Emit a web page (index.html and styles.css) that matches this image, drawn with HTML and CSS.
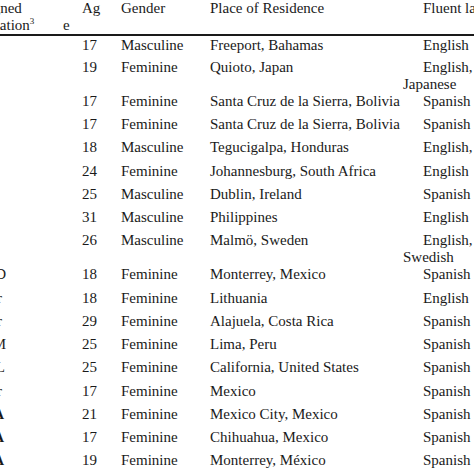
FILE: index.html
```html
<!DOCTYPE html>
<html lang="en">
<head>
<meta charset="utf-8">
<title>Participants</title>
<link rel="stylesheet" href="styles.css">
</head>
<body>
<table class="tbl">
  <colgroup>
    <col class="c-id"><col class="c-age"><col class="c-gen"><col class="c-place"><col class="c-lang">
  </colgroup>
  <thead>
    <tr>
      <th class="hid">Assigned<br>Identification<sup>3</sup></th>
      <th>Ag<br>e</th>
      <th>Gender</th>
      <th>Place of Residence</th>
      <th>Fluent languages</th>
    </tr>
  </thead>
  <tbody>
    <tr><td class="id"></td><td>17</td><td>Masculine</td><td>Freeport, Bahamas</td><td>English</td></tr>
    <tr><td class="id"></td><td>19</td><td>Feminine</td><td>Quioto, Japan</td><td><div class="two">English,<br>Japanese</div></td></tr>
    <tr><td class="id"></td><td>17</td><td>Feminine</td><td>Santa Cruz de la Sierra, Bolivia</td><td>Spanish</td></tr>
    <tr><td class="id"></td><td>17</td><td>Feminine</td><td>Santa Cruz de la Sierra, Bolivia</td><td>Spanish</td></tr>
    <tr><td class="id"></td><td>18</td><td>Masculine</td><td>Tegucigalpa, Honduras</td><td>English, Spanish</td></tr>
    <tr><td class="id"></td><td>24</td><td>Feminine</td><td>Johannesburg, South Africa</td><td>English</td></tr>
    <tr><td class="id"></td><td>25</td><td>Masculine</td><td>Dublin, Ireland</td><td>Spanish</td></tr>
    <tr><td class="id"></td><td>31</td><td>Masculine</td><td>Philippines</td><td>English</td></tr>
    <tr><td class="id"></td><td>26</td><td>Masculine</td><td>Malmö, Sweden</td><td><div class="two">English,<br>Swedish</div></td></tr>
    <tr><td class="id">GND</td><td>18</td><td>Feminine</td><td>Monterrey, Mexico</td><td>Spanish</td></tr>
    <tr><td class="id tail">Queer</td><td>18</td><td>Feminine</td><td>Lithuania</td><td>English</td></tr>
    <tr><td class="id tail">Queer</td><td>29</td><td>Feminine</td><td>Alajuela, Costa Rica</td><td>Spanish</td></tr>
    <tr><td class="id">CIS-M</td><td>25</td><td>Feminine</td><td>Lima, Peru</td><td>Spanish</td></tr>
    <tr><td class="id half">GL</td><td>25</td><td>Feminine</td><td>California, United States</td><td>Spanish</td></tr>
    <tr><td class="id tail">Queer</td><td>17</td><td>Feminine</td><td>Mexico</td><td>Spanish</td></tr>
    <tr><td class="id bold">LA</td><td>21</td><td>Feminine</td><td>Mexico City, Mexico</td><td>Spanish</td></tr>
    <tr><td class="id bold">LA</td><td>17</td><td>Feminine</td><td>Chihuahua, Mexico</td><td>Spanish</td></tr>
    <tr><td class="id bold">LA</td><td>19</td><td>Feminine</td><td>Monterrey, México</td><td>Spanish</td></tr>
  </tbody>
</table>
</body>
</html>
```

FILE: styles.css
```css
html, body {
  margin: 0;
  padding: 0;
  overflow: hidden;
  background: #ffffff;
}

body {
  width: 474px;
  height: 474px;
  font-family: "Liberation Serif", "Times New Roman", serif;
  font-size: 15px;
  color: #1a1a1a;
}

.tbl {
  table-layout: fixed;
  border-collapse: collapse;
  border-spacing: 0;
  width: 578px;
  margin-left: -51px;
  margin-top: -0.5px;
}

.c-id { width: 114px; }
.c-age { width: 39px; }
.c-gen { width: 89px; }
.c-place { width: 212px; }
.c-lang { width: 124px; }

th, td {
  padding: 0;
  text-align: left;
  vertical-align: top;
  font-weight: normal;
  line-height: 17px;
  text-indent: 19px;
  white-space: nowrap;
}

th:last-child, td:last-child {
  text-indent: 20px;
}

th.hid {
  text-indent: 17px;
}

thead tr {
  height: 34px;
  border-bottom: 2px solid #1a1a1a;
}

sup {
  font-size: 9px;
  line-height: 0;
  vertical-align: 6px;
}

tbody tr {
  height: 23.27px;
}

tbody td {
  padding-top: 1px;
}

.two {
  margin-bottom: -1px;
}

td.id {
  text-align: right;
  text-indent: 0;
  padding-right: 57px;
}

td.tail {
  padding-right: 61px;
}

td.half {
  padding-right: 58px;
}

td.bold {
  font-weight: bold;
  padding-right: 59px;
}
```
